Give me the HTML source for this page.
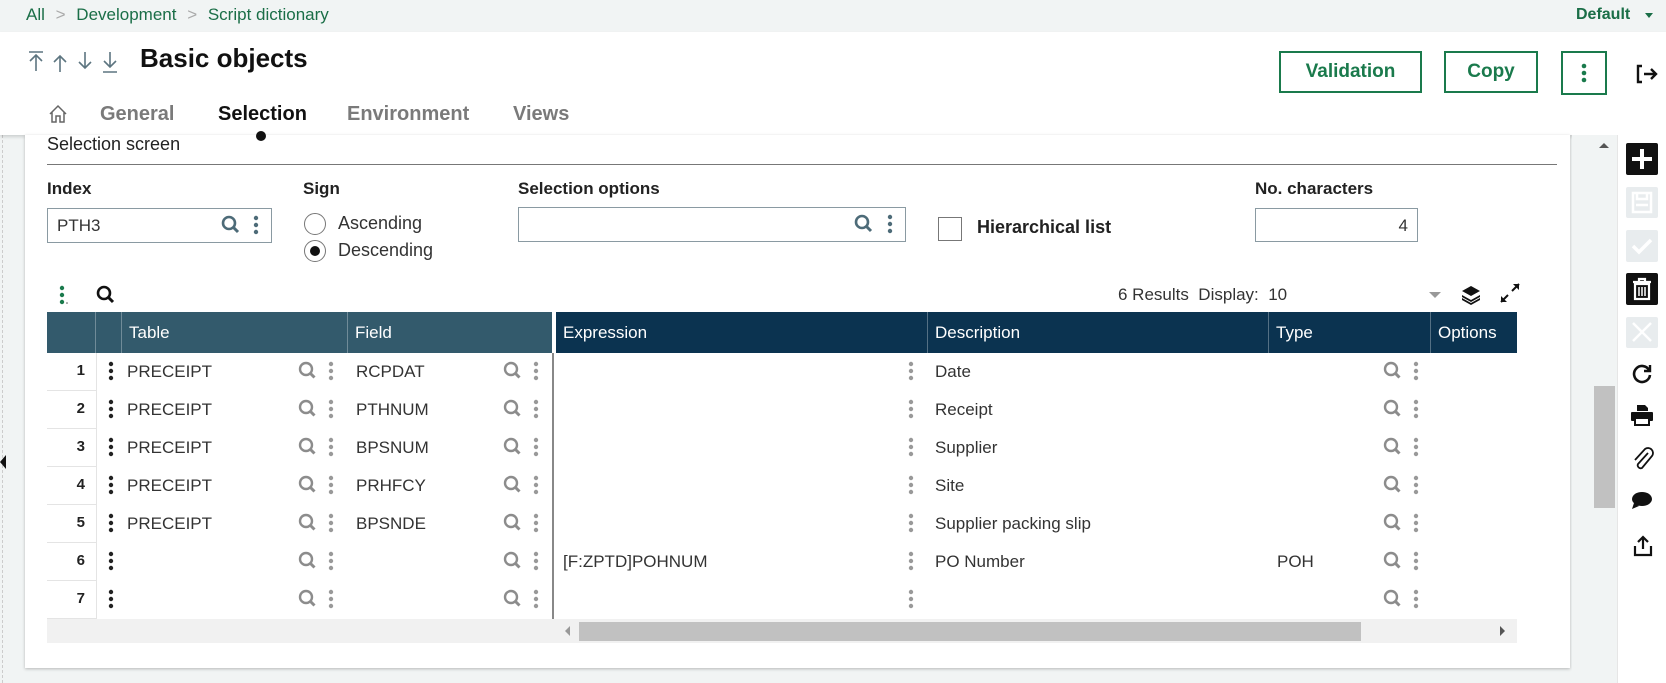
<!DOCTYPE html>
<html><head><meta charset="utf-8">
<style>
*{margin:0;padding:0;box-sizing:border-box}
body{width:1666px;height:683px;overflow:hidden;background:#f1f4f4;font-family:"Liberation Sans",sans-serif;color:#222;position:relative}
.a{position:absolute;white-space:nowrap}
.g{color:#1a6e47}
.btn{position:absolute;border:2px solid #1a7a4c;color:#1a7a4c;font-weight:bold;font-size:19px;display:flex;align-items:center;justify-content:center;background:#fff}
.tab{position:absolute;top:103px;font-size:19px;font-weight:bold;color:#7a7a7a}
.lbl{position:absolute;top:179px;font-size:17px;font-weight:bold;color:#222}
.inp{position:absolute;border:1px solid #8a9aa2;background:#fff}
.th{position:absolute;top:312px;height:41px;color:#fff;font-size:17px;line-height:41px;padding-left:7px;border-right:1px solid rgba(255,255,255,.3)}
.cell{position:absolute;font-size:17px;color:#333}
.ri{position:absolute}
</style></head><body>
<div class="a" style="left:2px;top:0;width:0;height:683px;border-left:1px dashed #ccc"></div>
<div class="a" style="left:0;top:455px;width:0;height:0;border-top:7px solid transparent;border-bottom:7px solid transparent;border-right:6px solid #111"></div>
<div class="a" style="left:0;top:0;width:1666px;height:32px;background:#f1f4f4"></div>
<div class="a g" style="left:26px;top:5px;font-size:17px">All <span style="color:#aaa;margin:0 6px">&gt;</span> Development <span style="color:#aaa;margin:0 6px">&gt;</span> Script dictionary</div>
<div class="a g" style="left:1576px;top:6px;font-size:16px;font-weight:bold">Default</div>
<div class="a" style="left:1645px;top:13px;border-left:4px solid transparent;border-right:4px solid transparent;border-top:5px solid #1a6e47"></div>
<div class="a" style="left:0;top:32px;width:1666px;height:103px;background:#fff;box-shadow:0 2px 3px rgba(0,0,0,.15)"></div>
<svg class="a" style="left:27px;top:49px" width="94" height="26" viewBox="0 0 94 26" fill="none" stroke="#5d7580" stroke-width="1.6">
<path d="M2 3h14M9 6v16M3 12l6-6 6 6"/><path d="M33 7v16M27 13l6-6 6 6"/><path d="M58 3v16M52 13l6 6 6-6"/><path d="M83 3v15M77 12l6 6 6-6M76 23h14"/></svg>
<div class="a" style="left:140px;top:43px;font-size:26px;font-weight:bold;color:#111">Basic objects</div>
<div class="btn" style="left:1279px;top:51px;width:143px;height:42px">Validation</div>
<div class="btn" style="left:1444px;top:51px;width:94px;height:42px">Copy</div>
<div class="btn" style="left:1561px;top:51px;width:46px;height:44px"><svg width="6" height="20"><circle cx="3" cy="3" r="2.3" fill="#1a7a4c"/><circle cx="3" cy="10" r="2.3" fill="#1a7a4c"/><circle cx="3" cy="17" r="2.3" fill="#1a7a4c"/></svg></div>
<svg class="a" style="left:1636px;top:64px" width="22" height="20" viewBox="0 0 22 20" fill="none" stroke="#111" stroke-width="2.4"><path d="M6 2H2v16h4"/><path d="M8 10h12M15 5l5 5-5 5"/></svg>
<svg class="a" style="left:48px;top:104px" width="20" height="20" viewBox="0 0 20 20" fill="none" stroke="#666" stroke-width="1.5"><path d="M2 10L10 2l8 8M4 8v10h4v-6h4v6h4V8"/></svg>
<div class="tab" style="left:100px;font-size:20px">General</div>
<div class="tab" style="left:218px;color:#111;font-size:20px">Selection</div>
<div class="tab" style="left:347px;font-size:20px">Environment</div>
<div class="tab" style="left:513px;font-size:20px">Views</div>
<div class="a" style="left:25px;top:135px;width:1545px;height:533px;background:#fff;box-shadow:0 1px 3px rgba(0,0,0,.25)"></div>
<div class="a" style="left:256px;top:131px;width:10px;height:10px;border-radius:5px;background:#111"></div>
<div class="a" style="left:47px;top:134px;font-size:18px;color:#222">Selection screen</div>
<div class="a" style="left:47px;top:164px;width:1510px;height:1px;background:#777"></div>
<div class="lbl" style="left:47px">Index</div>
<div class="lbl" style="left:303px">Sign</div>
<div class="lbl" style="left:518px">Selection options</div>
<div class="lbl" style="left:1255px">No. characters</div>
<div class="inp" style="left:47px;top:208px;width:225px;height:35px"><span class="a" style="left:9px;top:7px;font-size:17px;color:#333">PTH3</span></div>
<div class="inp" style="left:518px;top:207px;width:388px;height:35px"></div>
<div class="inp" style="left:1255px;top:208px;width:163px;height:34px"><span class="a" style="right:9px;top:7px;font-size:17px;color:#333">4</span></div>
<svg class="a" style="left:221px;top:215px" width="20" height="20" viewBox="0 0 20 20"><circle cx="8" cy="8" r="6" fill="none" stroke="#4d6b78" stroke-width="2.6"/><path d="M12 12l5 5" stroke="#4d6b78" stroke-width="3"/></svg>
<svg class="a" style="left:253px;top:214px" width="6" height="22"><circle cx="3" cy="4" r="2.2" fill="#4d6b78"/><circle cx="3" cy="11" r="2.2" fill="#4d6b78"/><circle cx="3" cy="18" r="2.2" fill="#4d6b78"/></svg>
<svg class="a" style="left:854px;top:214px" width="20" height="20" viewBox="0 0 20 20"><circle cx="8" cy="8" r="6" fill="none" stroke="#4d6b78" stroke-width="2.6"/><path d="M12 12l5 5" stroke="#4d6b78" stroke-width="3"/></svg>
<svg class="a" style="left:887px;top:213px" width="6" height="22"><circle cx="3" cy="4" r="2.2" fill="#4d6b78"/><circle cx="3" cy="11" r="2.2" fill="#4d6b78"/><circle cx="3" cy="18" r="2.2" fill="#4d6b78"/></svg>
<div class="a" style="left:304px;top:213px;width:22px;height:22px;border:1px solid #777;border-radius:50%"></div>
<div class="a" style="left:304px;top:240px;width:22px;height:22px;border:1px solid #777;border-radius:50%"><div style="margin:5px;width:10px;height:10px;border-radius:50%;background:#111"></div></div>
<div class="a" style="left:338px;top:213px;font-size:18px;color:#333">Ascending</div>
<div class="a" style="left:338px;top:240px;font-size:18px;color:#333">Descending</div>
<div class="a" style="left:938px;top:217px;width:24px;height:24px;border:1px solid #777"></div>
<div class="a" style="left:977px;top:217px;font-size:18px;font-weight:bold;color:#222">Hierarchical list</div>
<svg class="a" style="left:59px;top:285px" width="10" height="22"><circle cx="3" cy="3" r="2.2" fill="#1a7a4c"/><circle cx="3" cy="10" r="2.2" fill="#1a7a4c"/><circle cx="3" cy="17" r="2.2" fill="#1a7a4c"/><circle cx="8" cy="18" r=".8" fill="#555"/></svg>
<svg class="a" style="left:96px;top:285px" width="20" height="20" viewBox="0 0 20 20"><circle cx="8" cy="8" r="6" fill="none" stroke="#111" stroke-width="2.6"/><path d="M12 12l5 5" stroke="#111" stroke-width="3"/></svg>
<div class="a" style="left:1118px;top:285px;font-size:17px;color:#333">6 Results&nbsp; Display:&nbsp; 10</div>
<div class="a" style="left:1429px;top:292px;border-left:6px solid transparent;border-right:6px solid transparent;border-top:6px solid #999"></div>
<svg class="a" style="left:1460px;top:284px" width="22" height="22" viewBox="0 0 22 22" fill="#111"><path d="M11 2l9 5-9 5-9-5z"/><path d="M2 11l9 5 9-5v2l-9 5-9-5z"/><path d="M2 15l9 5 9-5v2l-9 5-9-5z" transform="translate(0,-1)"/></svg>
<svg class="a" style="left:1499px;top:282px" width="22" height="22" viewBox="0 0 22 22" fill="#111" stroke="#111" stroke-width="2"><path d="M13 9l7-7M2 20l7-7" /><path d="M14 2h6v6z M2 14v6h6z" stroke-width="0"/></svg>
<div class="a" style="left:47px;top:312px;width:505px;height:41px;background:#335a6c"></div>
<div class="th" style="left:47px;width:49px"></div>
<div class="th" style="left:96px;width:26px"></div>
<div class="th" style="left:122px;width:226px">Table</div>
<div class="th" style="left:348px;width:204px;border-right:none">Field</div>
<div class="a" style="left:556px;top:312px;width:961px;height:41px;background:#0b3350"></div>
<div class="th" style="left:556px;width:372px">Expression</div>
<div class="th" style="left:928px;width:341px">Description</div>
<div class="th" style="left:1269px;width:162px">Type</div>
<div class="th" style="left:1431px;width:86px;border-right:none">Options</div>
<div class="a" style="left:552px;top:353px;width:2px;height:266px;background:#888"></div>
<div class="a" style="left:96px;top:353px;width:1px;height:266px;background:#e4e4e4"></div>
<div id="rows"></div>
<div class="a" style="left:47px;top:619px;width:1470px;height:24px;background:#f1f1f1"></div>
<div class="a" style="left:565px;top:626px;border-top:5px solid transparent;border-bottom:5px solid transparent;border-right:5px solid #999"></div>
<div class="a" style="left:579px;top:622px;width:782px;height:19px;background:#c1c1c1"></div>
<div class="a" style="left:1500px;top:626px;border-top:5px solid transparent;border-bottom:5px solid transparent;border-left:5px solid #555"></div>
<div class="a" style="left:1572px;top:135px;width:45px;height:548px;background:#f1f4f4"></div>
<div class="a" style="left:1599px;top:143px;border-left:5px solid transparent;border-right:5px solid transparent;border-bottom:5px solid #555"></div>
<div class="a" style="left:1594px;top:386px;width:21px;height:122px;background:#c1c1c1"></div>
<div class="a" style="left:1617px;top:135px;width:49px;height:548px;background:#fff;border-left:1px solid #e6e6e6"></div>
<div class="a" style="left:1626px;top:143px;width:32px;height:32px;background:#111;border-radius:2px"><svg width="32" height="32"><path d="M16 6v20M6 16h20" stroke="#fff" stroke-width="4"/></svg></div>
<div class="a" style="left:1626px;top:187px;width:32px;height:31px;background:#e8ecee;border-radius:2px"><svg width="32" height="31" fill="none" stroke="#fff" stroke-width="2.5"><rect x="7" y="6" width="18" height="19"/><path d="M11 6v6h10V6M10 18h12"/></svg></div>
<div class="a" style="left:1626px;top:230px;width:32px;height:32px;background:#e8ecee;border-radius:2px"><svg width="32" height="32" fill="none" stroke="#fff" stroke-width="3.5"><path d="M7 16l6 6 12-12"/></svg></div>
<div class="a" style="left:1626px;top:273px;width:32px;height:32px;background:#111;border-radius:2px"><svg width="32" height="32" fill="none" stroke="#fff" stroke-width="2.2"><path d="M7 9h18M13 9V6h6v3"/><rect x="9" y="11" width="14" height="15"/><path d="M13 14v9M16 14v9M19 14v9" stroke-width="1.5"/></svg></div>
<div class="a" style="left:1626px;top:317px;width:32px;height:31px;background:#e8ecee;border-radius:2px"><svg width="32" height="31" fill="none" stroke="#fff" stroke-width="2.5"><path d="M7 6l18 18M25 6L7 24"/></svg></div>
<svg class="a" style="left:1631px;top:362px" width="22" height="22" viewBox="0 0 22 22" fill="none" stroke="#111" stroke-width="2.6"><path d="M18 8A8 8 0 1 0 19 13"/><path d="M13 9h6V3" stroke-width="2.4"/></svg>
<svg class="a" style="left:1630px;top:404px" width="24" height="22" viewBox="0 0 24 22" fill="#111"><path d="M7 1h8l3 3v3H7z"/><rect x="1" y="8" width="22" height="9" rx="1"/><rect x="5" y="14" width="14" height="7" fill="#fff" stroke="#111" stroke-width="2"/></svg>
<svg class="a" style="left:1632px;top:447px" width="22" height="24" viewBox="0 0 22 24" fill="none" stroke="#111" stroke-width="1.8"><path d="M16 6L6 17a3 3 0 0 0 4 4L20 9a5 5 0 0 0-7-7L3 13"/></svg>
<svg class="a" style="left:1631px;top:490px" width="22" height="20" viewBox="0 0 22 20" fill="#111"><ellipse cx="11" cy="9" rx="10" ry="7"/><path d="M3 13l-2 6 7-3z"/></svg>
<svg class="a" style="left:1632px;top:534px" width="22" height="24" viewBox="0 0 22 24" fill="none" stroke="#111" stroke-width="2.2"><path d="M11 15V3M6 8l5-5 5 5M3 12v9h16v-9"/></svg>
<script>
var rows=[["PRECEIPT","RCPDAT","","Date",""],["PRECEIPT","PTHNUM","","Receipt",""],["PRECEIPT","BPSNUM","","Supplier",""],["PRECEIPT","PRHFCY","","Site",""],["PRECEIPT","BPSNDE","","Supplier packing slip",""],["","","[F:ZPTD]POHNUM","PO Number","POH"],["","","","",""]];
var h="";
function mag(x,y){return '<svg class="ri" style="left:'+x+'px;top:'+y+'px" width="20" height="20" viewBox="0 0 20 20"><circle cx="8" cy="8" r="6" fill="none" stroke="#8c8c8c" stroke-width="2.4"/><path d="M12 12l4.5 4.5" stroke="#8c8c8c" stroke-width="3"/></svg>';}
function keb(x,y,c){return '<svg class="ri" style="left:'+x+'px;top:'+y+'px" width="6" height="22"><circle cx="3" cy="4" r="2.2" fill="'+c+'"/><circle cx="3" cy="11" r="2.2" fill="'+c+'"/><circle cx="3" cy="18" r="2.2" fill="'+c+'"/></svg>';}
for(var i=0;i<7;i++){var t=353+i*38,c=t+19,r=rows[i];
h+='<div class="a" style="left:47px;top:'+(t+37)+'px;width:49px;height:1px;background:#e4e4e4"></div>';
h+='<div class="cell" style="left:47px;width:38px;text-align:right;top:'+(c-10)+'px;font-size:15px;color:#222;font-weight:bold">'+(i+1)+'</div>';
h+=keb(108,c-12,"#222");
h+='<div class="cell" style="left:127px;top:'+(c-10)+'px">'+r[0]+'</div>';
h+=mag(298,c-11)+keb(328,c-12,"#999");
h+='<div class="cell" style="left:356px;top:'+(c-10)+'px">'+r[1]+'</div>';
h+=mag(503,c-11)+keb(533,c-12,"#999");
h+='<div class="cell" style="left:563px;top:'+(c-10)+'px">'+r[2]+'</div>';
h+=keb(908,c-12,"#999");
h+='<div class="cell" style="left:935px;top:'+(c-10)+'px">'+r[3]+'</div>';
h+='<div class="cell" style="left:1277px;top:'+(c-10)+'px">'+r[4]+'</div>';
h+=mag(1383,c-11)+keb(1413,c-12,"#999");}
document.getElementById("rows").innerHTML=h;
</script>
</body></html>
